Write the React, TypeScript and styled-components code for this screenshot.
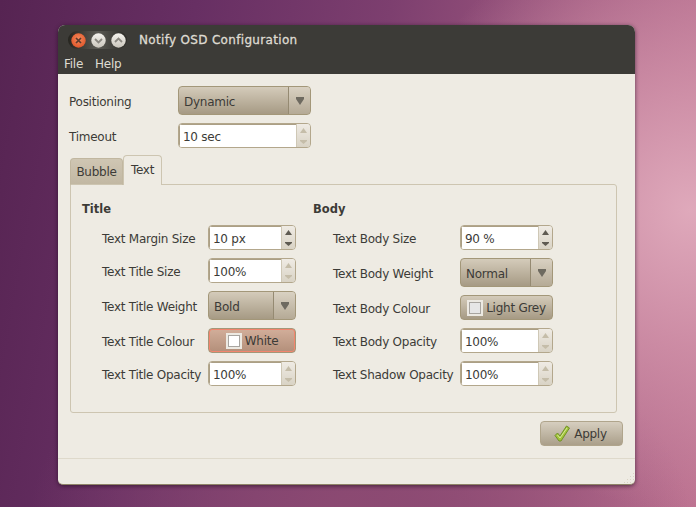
import React from "react";
import styled, { createGlobalStyle } from "styled-components";

const Global = createGlobalStyle`
  html, body { margin: 0; padding: 0; height: 100%; overflow: hidden; }
  #root { height: 100%; }
  * { box-sizing: border-box; }
`;

const Desktop = styled.div`
  width: 696px;
  height: 507px;
  padding: 25px 61px 22px 58px;
  background:
    radial-gradient(ellipse 300px 300px at 690px 210px, #dfa9bb 0%, rgba(212,150,172,0.75) 45%, rgba(190,115,145,0) 100%),
    radial-gradient(ellipse 330px 210px at 360px 520px, #8c4a72 0%, rgba(140,74,114,0) 100%),
    linear-gradient(100deg, #562452 0%, #672f63 25%, #7d3f6f 50%, #a15a80 75%, #bd7391 100%);
  font-family: "DejaVu Sans", sans-serif;
  font-size: 12px;
  letter-spacing: -0.26px;
  color: #3c3b37;
`;

const Win = styled.div`
  width: 577px;
  height: 460px;
  display: flex;
  flex-direction: column;
  background: #eeebe3;
  border-radius: 7px 7px 5px 5px;
  box-shadow: 0 1px 4px rgba(30, 10, 30, 0.65);
  border-bottom: 1px solid #8f8468;
  overflow: hidden;
`;

const Chrome = styled.div`
  height: 49px;
  flex: none;
  background: #3c3b37;
  color: #dfdbd2;
`;

const TitleBar = styled.div`
  height: 29px;
  display: flex;
  align-items: center;
  padding: 1px 0 0 10px;
`;

const Buttons = styled.div`
  width: 59px;
  height: 18px;
  display: flex;
  align-items: center;
  padding-left: 3px;
  gap: 5px;
  border-radius: 9px;
  background: linear-gradient(90deg, #26251f, #5b5a54 50%, #2c2b27);
`;

const Title = styled.div`
  margin-left: 12px;
  letter-spacing: 0.32px;
  color: #dfdbd2;
  -webkit-text-stroke: 0.3px #dfdbd2;
`;

const MenuBar = styled.div`
  display: flex;
  gap: 12px;
  padding: 3px 0 0 6px;
  line-height: 15px;
  color: #dfdbd2;
`;

const Content = styled.div`
  flex: 1;
  display: flex;
  flex-direction: column;
  padding: 12px 18px 0 12px;
  min-height: 0;
`;

const TopRow = styled.div<{ $mt?: number }>`
  display: flex;
  align-items: center;
  margin-top: ${(p) => p.$mt ?? 0}px;
`;

const TopLabel = styled.div`
  width: 109px;
  margin-left: -1px;
  padding-top: 3px;
`;

const Spin = styled.div<{ $w: number }>`
  width: ${(p) => p.$w}px;
  height: 25px;
  flex: none;
  display: flex;
  border: 1px solid #b3a78c;
  border-radius: 4px;
  overflow: hidden;
`;

const SpinText = styled.div`
  flex: 1;
  background: #fff;
  padding-left: 4px;
  line-height: 26px;
  box-shadow: inset 1px 1px 0 #ab9f85;
  border-right: 1px solid #cfc8b6;
`;

const SpinBtns = styled.div<{ $on?: boolean }>`
  width: 13px;
  display: flex;
  flex-direction: column;
  align-items: center;
  justify-content: center;
  gap: 7px;
  background: linear-gradient(#efebe4, #d9d3c5);
  color: ${(p) => (p.$on ? "#5f5b52" : "#c5bda9")};
`;

const Combo = styled.div<{ $w: number }>`
  width: ${(p) => p.$w}px;
  height: 29px;
  flex: none;
  display: flex;
  align-items: stretch;
  border: 1px solid #a39779;
  border-radius: 4px;
  background: linear-gradient(#d4cbba, #a69a84);
  overflow: hidden;
`;

const ComboText = styled.div`
  flex: 1;
  padding-left: 5px;
  line-height: 30px;
  border-right: 1px solid #958a72;
`;

const ComboArrow = styled.div`
  width: 21px;
  display: flex;
  align-items: center;
  justify-content: center;
  background: linear-gradient(#d9d1c2, #b5aa96);
  color: #6e6a60;
`;

const Notebook = styled.div`
  margin-top: 8px;
  display: flex;
  flex-direction: column;
`;

const TabStrip = styled.div`
  display: flex;
  align-items: flex-end;
  height: 29px;
  margin-bottom: -1px;
  position: relative;
  z-index: 1;
`;

const Tab = styled.div<{ $active?: boolean }>`
  height: ${(p) => (p.$active ? 30 : 27)}px;
  width: ${(p) => (p.$active ? 39 : 53)}px;
  border: 1px solid ${(p) => (p.$active ? "#cdc5b1" : "#c1b7a0")};
  border-bottom: ${(p) => (p.$active ? "none" : "1px solid #cdc5b1")};
  border-radius: 4px 4px 0 0;
  background: ${(p) => (p.$active ? "#eeebe3" : "linear-gradient(#cfc6b3, #c2b8a3)")};
  line-height: ${(p) => (p.$active ? 28 : 27)}px;
  text-align: center;
`;

const Panel = styled.div`
  height: 229px;
  border: 1px solid #cdc5b1;
  border-radius: 0 3px 3px 3px;
  padding: 17px 0 0 11px;
  display: flex;
`;

const Column = styled.div<{ $w: number }>`
  width: ${(p) => p.$w}px;
  flex: none;
  display: flex;
  flex-direction: column;
`;

const Heading = styled.div`
  font-weight: 700;
  font-size: 11.5px;
  letter-spacing: 0;
  height: 16px;
  line-height: 15px;
  margin-bottom: 7px;
`;

const Rows = styled.div`
  display: flex;
  flex-direction: column;
  gap: 8px;
  padding-left: 20px;
`;

const Row = styled.div`
  display: flex;
  align-items: center;
`;

const RowLabel = styled.div<{ $w: number }>`
  width: ${(p) => p.$w}px;
  flex: none;
  padding-top: 3px;
  white-space: nowrap;
`;

const ColourBtn = styled.div<{ $w: number; $focus?: boolean }>`
  width: ${(p) => p.$w}px;
  height: 25px;
  flex: none;
  display: flex;
  align-items: center;
  justify-content: center;
  gap: 3px;
  border: 1px solid #a39779;
  border-radius: 4px;
  background: ${(p) =>
    p.$focus ? "linear-gradient(#d2ae9a, #b38f7a)" : "linear-gradient(#d4cbba, #a69a84)"};
  box-shadow: ${(p) => (p.$focus ? "inset 0 0 0 1px #f3856e" : "none")};
`;

const Swatch = styled.span<{ $bg: string }>`
  width: 16px;
  height: 16px;
  display: block;
  flex: none;
  background: ${(p) => p.$bg};
  border: 2px solid #ece9e2;
  box-shadow: inset 0 0 0 1px #a8a5a0;
`;

const Footer = styled.div`
  display: flex;
  justify-content: flex-end;
  margin-top: 8px;
  margin-right: -6px;
`;

const ApplyBtn = styled.div`
  width: 83px;
  height: 25px;
  display: flex;
  align-items: center;
  justify-content: center;
  gap: 4px;
  padding-right: 2px;
  border: 1px solid #b0a58c;
  border-radius: 4px;
  background: linear-gradient(#d6cebf, #aa9f8a);
`;

const StatusBar = styled.div`
  height: 26px;
  flex: none;
  border-top: 1px solid #ded9cb;
  position: relative;
`;

const Grip = styled.div`
  position: absolute;
  right: 1px;
  bottom: 1px;
  width: 11px;
  height: 11px;
  background: radial-gradient(circle, #d9d3c4 0.8px, transparent 1px) 0 0 / 3px 3px;
  clip-path: polygon(100% 0, 100% 100%, 0 100%);
`;

const Up = () => (
  <svg width="7" height="5" viewBox="0 0 7 5"><path d="M3.5 0 7 5H0z" fill="currentColor" /></svg>
);
const Down = () => (
  <svg width="7" height="4" viewBox="0 0 7 4"><path d="M0 0h7v1L3.5 4 0 1z" fill="currentColor" /></svg>
);
const ComboTri = () => (
  <svg width="8" height="8" viewBox="0 0 8 8"><path d="M0 0h8v2L4 8 0 2z" fill="currentColor" /></svg>
);

const WinBtn = ({ kind }: { kind: "close" | "min" | "max" }) => (
  <svg width="15" height="15" viewBox="0 0 15 15">
    <defs>
      <radialGradient id="wbc" cx="50%" cy="40%" r="60%">
        <stop offset="0" stopColor="#f58a5c" />
        <stop offset="1" stopColor="#e0562a" />
      </radialGradient>
      <linearGradient id="wbg" x1="0" y1="0" x2="0" y2="1">
        <stop offset="0" stopColor="#f5f3ee" />
        <stop offset="1" stopColor="#c9c5bb" />
      </linearGradient>
    </defs>
    <circle cx="7.5" cy="7.5" r="7.2" fill={kind === "close" ? "url(#wbc)" : "url(#wbg)"} />
    {kind === "close" && <path d="M5 5l5 5M10 5l-5 5" stroke="#5b3a2c" strokeWidth="1.7" />}
    {kind === "min" && <path d="M4 6l3.5 3.5L11 6" stroke="#8a8780" strokeWidth="1.8" fill="none" />}
    {kind === "max" && <path d="M4 9l3.5-3.5L11 9" stroke="#8a8780" strokeWidth="1.8" fill="none" />}
  </svg>
);

const Check = () => (
  <svg width="16" height="17" viewBox="0 0 16 17">
    <path d="M1 10.5 3.5 8 6 11 12.5 1 15.5 3 7 16H5z" fill="#a4c639" stroke="#6f8f2a" strokeWidth="1" strokeLinejoin="round" />
    <path d="M3.5 10 6 13 13 3" stroke="#d4e89a" strokeWidth="1" fill="none" />
  </svg>
);

const SpinBox = ({ w, value, on }: { w: number; value: string; on?: boolean }) => (
  <Spin $w={w}>
    <SpinText>{value}</SpinText>
    <SpinBtns $on={on}>
      <Up />
      <Down />
    </SpinBtns>
  </Spin>
);

const ComboBox = ({ w, value }: { w: number; value: string }) => (
  <Combo $w={w}>
    <ComboText>{value}</ComboText>
    <ComboArrow>
      <ComboTri />
    </ComboArrow>
  </Combo>
);

export default function App() {
  return (
    <Desktop>
      <Global />
      <Win>
        <Chrome>
          <TitleBar>
            <Buttons>
              <WinBtn kind="close" />
              <WinBtn kind="min" />
              <WinBtn kind="max" />
            </Buttons>
            <Title>Notify OSD Configuration</Title>
          </TitleBar>
          <MenuBar>
            <span>File</span>
            <span>Help</span>
          </MenuBar>
        </Chrome>
        <Content>
          <TopRow>
            <TopLabel>Positioning</TopLabel>
            <ComboBox w={133} value="Dynamic" />
          </TopRow>
          <TopRow $mt={8}>
            <TopLabel>Timeout</TopLabel>
            <SpinBox w={133} value="10 sec" />
          </TopRow>
          <Notebook>
            <TabStrip>
              <Tab>Bubble</Tab>
              <Tab $active>Text</Tab>
            </TabStrip>
            <Panel>
              <Column $w={231}>
                <Heading>Title</Heading>
                <Rows>
                  <Row><RowLabel $w={106}>Text Margin Size</RowLabel><SpinBox w={88} value="10 px" on /></Row>
                  <Row><RowLabel $w={106}>Text Title Size</RowLabel><SpinBox w={88} value="100%" /></Row>
                  <Row><RowLabel $w={106}>Text Title Weight</RowLabel><ComboBox w={88} value="Bold" /></Row>
                  <Row>
                    <RowLabel $w={106}>Text Title Colour</RowLabel>
                    <ColourBtn $w={88} $focus><Swatch $bg="#ffffff" />White</ColourBtn>
                  </Row>
                  <Row><RowLabel $w={106}>Text Title Opacity</RowLabel><SpinBox w={88} value="100%" /></Row>
                </Rows>
              </Column>
              <Column $w={260}>
                <Heading>Body</Heading>
                <Rows>
                  <Row><RowLabel $w={127}>Text Body Size</RowLabel><SpinBox w={93} value="90 %" on /></Row>
                  <Row><RowLabel $w={127}>Text Body Weight</RowLabel><ComboBox w={93} value="Normal" /></Row>
                  <Row>
                    <RowLabel $w={127}>Text Body Colour</RowLabel>
                    <ColourBtn $w={93}><Swatch $bg="#e6e6e6" />Light Grey</ColourBtn>
                  </Row>
                  <Row><RowLabel $w={127}>Text Body Opacity</RowLabel><SpinBox w={93} value="100%" /></Row>
                  <Row><RowLabel $w={127}>Text Shadow Opacity</RowLabel><SpinBox w={93} value="100%" /></Row>
                </Rows>
              </Column>
            </Panel>
          </Notebook>
          <Footer>
            <ApplyBtn><Check />Apply</ApplyBtn>
          </Footer>
        </Content>
        <StatusBar><Grip /></StatusBar>
      </Win>
    </Desktop>
  );
}
